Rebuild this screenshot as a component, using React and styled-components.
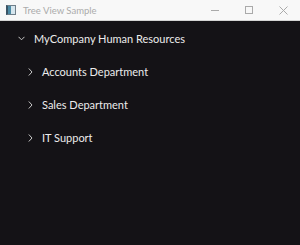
import React from 'react';
import styled, { createGlobalStyle } from 'styled-components';

const Global = createGlobalStyle`
  html, body { margin: 0; padding: 0; background: #141216; }
  body { font-family: "Segoe UI", Lato, "Noto Sans", sans-serif; }
`;

const Window = styled.div`
  width: 300px;
  height: 245px;
  display: flex;
  flex-direction: column;
  background: #141216;
  overflow: hidden;
`;

const TitleBar = styled.div`
  height: 20px;
  flex: none;
  background: #f8f8f8;
  border-bottom: 1px solid #d4d4d4;
  display: flex;
  align-items: center;
  padding-left: 6px;
`;

const AppIcon = styled.div`
  width: 7px;
  height: 8px;
  border: 1px solid #6f7f8a;
  border-left: 2px solid #3b5566;
  background: linear-gradient(90deg, #4d8aa4 0 45%, #d6e6ee 45% 100%);
  margin-right: 7px;
`;

const Title = styled.span`
  font-size: 9.5px;
  color: #ababab;
  flex: 1;
`;

const Caption = styled.div`
  width: 34px;
  height: 20px;
  display: flex;
  align-items: center;
  justify-content: center;
`;

const Tree = styled.ul`
  list-style: none;
  margin: 0;
  padding: 1px 0 0;
`;

const Row = styled.li`
  height: 33px;
  display: flex;
  align-items: center;
  padding-left: ${p => p.$indent}px;
  color: #ececec;
  font-size: 11px;
`;

const Chevron = styled.span`
  width: ${p => p.$w}px;
  display: flex;
  align-items: center;
`;

const Down = () => (
  <svg width="7" height="5" viewBox="0 0 7 5">
    <path d="M0.5 0.8 L3.5 3.8 L6.5 0.8" fill="none" stroke="#c8c8c8" strokeWidth="1" />
  </svg>
);

const Right = () => (
  <svg width="5" height="8" viewBox="0 0 5 8">
    <path d="M0.8 0.5 L4 4 L0.8 7.5" fill="none" stroke="#c8c8c8" strokeWidth="1" />
  </svg>
);

const children = ['Accounts Department', 'Sales Department', 'IT Support'];

export default function App() {
  return (
    <Window>
      <Global />
      <TitleBar>
        <AppIcon />
        <Title>Tree View Sample</Title>
        <Caption>
          <svg width="8" height="8" viewBox="0 0 8 8"><path d="M0 4.5 H8" stroke="#aaa" /></svg>
        </Caption>
        <Caption>
          <svg width="8" height="8" viewBox="0 0 8 8"><rect x="0.5" y="0.5" width="7" height="7" fill="none" stroke="#aaa" /></svg>
        </Caption>
        <Caption>
          <svg width="9" height="9" viewBox="0 0 9 9"><path d="M0.5 0.5 L8.5 8.5 M8.5 0.5 L0.5 8.5" stroke="#aaa" /></svg>
        </Caption>
      </TitleBar>
      <Tree>
        <Row $indent={18}>
          <Chevron $w={16}><Down /></Chevron>
          MyCompany Human Resources
        </Row>
        {children.map(c => (
          <Row key={c} $indent={28}>
            <Chevron $w={14}><Right /></Chevron>
            {c}
          </Row>
        ))}
      </Tree>
    </Window>
  );
}
